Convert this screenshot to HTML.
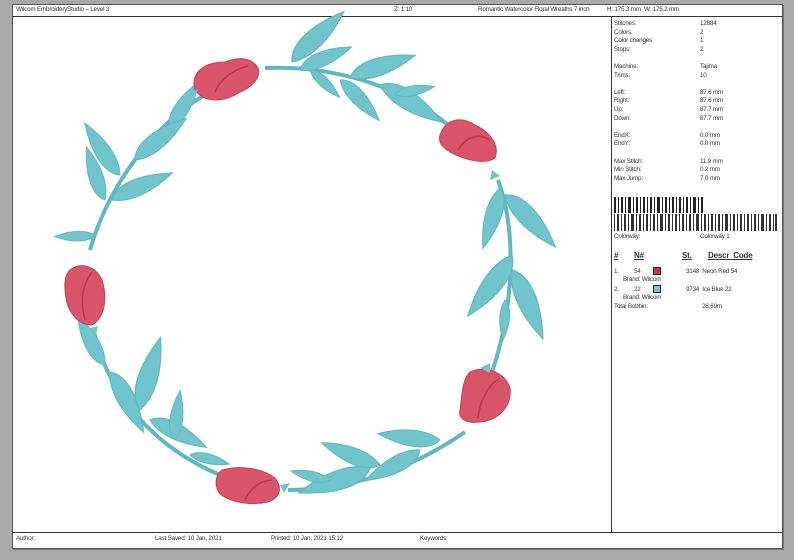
<!DOCTYPE html>
<html><head><meta charset="utf-8"><style>
body{margin:0;width:794px;height:560px;background:#a9a9a9;overflow:hidden;font-family:"Liberation Sans",sans-serif;}
.page{position:absolute;left:12px;top:4px;width:769px;height:543px;background:#fff;border:1px solid #555;box-shadow:1px 1px 0 #777;}
.t{position:absolute;font-size:6.3px;color:#333;white-space:nowrap;letter-spacing:-0.2px}
.hl{position:absolute;background:#333;}
</style></head><body>
<div class="page"></div>
<div class="hl" style="left:12px;top:16px;width:770px;height:1px"></div>
<div class="hl" style="left:611px;top:16px;width:1px;height:516px"></div>
<div class="hl" style="left:12px;top:532px;width:770px;height:1px"></div>
<div class="t" style="left:16px;top:6px">Wilcom EmbroideryStudio – Level 3</div>
<div class="t" style="left:394px;top:6px">Z: 1:10</div>
<div class="t" style="left:478px;top:6px">Romantic Watercolor Floral Wreaths 7 inch</div>
<div class="t" style="left:607px;top:6px">H: 175.3 mm &nbsp;W: 175.2 mm</div>
<div class="t" style="left:16px;top:535px">Author:</div>
<div class="t" style="left:155px;top:535px">Last Saved: 10 Jan, 2021</div>
<div class="t" style="left:271px;top:535px">Printed: 10 Jan, 2021 15:12</div>
<div class="t" style="left:420px;top:535px">Keywords:</div>

<div class="t" style="left:614px;top:20px;line-height:8.6px">Stitches:<br>Colors:<br>Color changes:<br>Stops:<br><br>Machine:<br>Trims:<br><br>Left:<br>Right:<br>Up:<br>Down:<br><br>EndX:<br>EndY:<br><br>Max Stitch:<br>Min Stitch:<br>Max Jump:</div>
<div class="t" style="left:700px;top:20px;line-height:8.6px">12884<br>2<br>1<br>2<br><br>Tajima<br>10<br><br>87.6 mm<br>87.6 mm<br>87.7 mm<br>87.7 mm<br><br>0.0 mm<br>0.0 mm<br><br>11.9 mm<br>0.2 mm<br>7.0 mm</div>
<svg style="position:absolute;left:614px;top:197px" width="168" height="35">
<g fill="#222">
<rect x="0" y="0" width="2" height="16"/><rect x="4" y="0" width="1" height="16"/><rect x="7" y="0" width="2" height="16"/><rect x="11" y="0" width="1" height="16"/><rect x="14" y="0" width="3" height="16"/><rect x="19" y="0" width="1" height="16"/><rect x="22" y="0" width="2" height="16"/><rect x="26" y="0" width="1" height="16"/><rect x="29" y="0" width="2" height="16"/><rect x="33" y="0" width="1" height="16"/><rect x="36" y="0" width="2" height="16"/><rect x="40" y="0" width="1" height="16"/><rect x="43" y="0" width="3" height="16"/><rect x="48" y="0" width="1" height="16"/><rect x="51" y="0" width="2" height="16"/><rect x="55" y="0" width="1" height="16"/><rect x="58" y="0" width="2" height="16"/><rect x="62" y="0" width="1" height="16"/><rect x="65" y="0" width="2" height="16"/><rect x="69" y="0" width="1" height="16"/><rect x="72" y="0" width="2" height="16"/><rect x="76" y="0" width="1" height="16"/><rect x="79" y="0" width="3" height="16"/><rect x="84" y="0" width="1" height="16"/><rect x="87" y="0" width="2" height="16"/>
</g>
<g fill="#333">
<rect x="0" y="17" width="1" height="17"/><rect x="3" y="17" width="2" height="17"/><rect x="7" y="17" width="1" height="17"/><rect x="10" y="17" width="2" height="17"/><rect x="14" y="17" width="1" height="17"/><rect x="17" y="17" width="3" height="17"/><rect x="22" y="17" width="1" height="17"/><rect x="25" y="17" width="2" height="17"/><rect x="29" y="17" width="1" height="17"/><rect x="32" y="17" width="2" height="17"/><rect x="36" y="17" width="1" height="17"/><rect x="39" y="17" width="2" height="17"/><rect x="43" y="17" width="1" height="17"/><rect x="46" y="17" width="3" height="17"/><rect x="51" y="17" width="1" height="17"/><rect x="54" y="17" width="2" height="17"/><rect x="58" y="17" width="1" height="17"/><rect x="61" y="17" width="2" height="17"/><rect x="65" y="17" width="1" height="17"/><rect x="68" y="17" width="2" height="17"/><rect x="72" y="17" width="1" height="17"/><rect x="75" y="17" width="2" height="17"/><rect x="79" y="17" width="1" height="17"/><rect x="82" y="17" width="3" height="17"/><rect x="87" y="17" width="1" height="17"/><rect x="90" y="17" width="2" height="17"/><rect x="94" y="17" width="1" height="17"/><rect x="97" y="17" width="2" height="17"/><rect x="101" y="17" width="1" height="17"/><rect x="104" y="17" width="2" height="17"/><rect x="108" y="17" width="1" height="17"/><rect x="111" y="17" width="3" height="17"/><rect x="116" y="17" width="1" height="17"/><rect x="119" y="17" width="2" height="17"/><rect x="123" y="17" width="1" height="17"/><rect x="126" y="17" width="2" height="17"/><rect x="130" y="17" width="1" height="17"/><rect x="133" y="17" width="2" height="17"/><rect x="137" y="17" width="1" height="17"/><rect x="140" y="17" width="2" height="17"/><rect x="144" y="17" width="1" height="17"/><rect x="147" y="17" width="3" height="17"/><rect x="152" y="17" width="1" height="17"/><rect x="155" y="17" width="2" height="17"/><rect x="159" y="17" width="1" height="17"/><rect x="161" y="17" width="2" height="17"/>
</g></svg>
<div class="t" style="left:614px;top:233px;background:#fff">Colorway:</div>
<div class="t" style="left:700px;top:233px;background:#fff">Colorway 1</div>
<div class="t" style="left:614px;top:251px;font-size:8px;font-weight:bold;text-decoration:underline">#</div>
<div class="t" style="left:634px;top:251px;font-size:8px;font-weight:bold;text-decoration:underline">N#</div>
<div class="t" style="left:682px;top:251px;font-size:8px;font-weight:bold;text-decoration:underline">St.</div>
<div class="t" style="left:708px;top:251px;font-size:8px;font-weight:bold;text-decoration:underline">Descr &nbsp;Code</div>
<div class="t" style="left:614px;top:268px">1.</div><div class="t" style="left:634px;top:268px">54</div>
<div style="position:absolute;left:653px;top:267px;width:6px;height:6px;background:#d9304f;border:1px solid #222"></div>
<div class="t" style="left:686px;top:268px">3148 &nbsp;Neon Red 54</div>
<div class="t" style="left:623px;top:276px">Brand: Wilcom</div>
<div class="t" style="left:614px;top:286px">2.</div><div class="t" style="left:634px;top:286px">22</div>
<div style="position:absolute;left:653px;top:285px;width:6px;height:6px;background:#7ec4e0;border:1px solid #222"></div>
<div class="t" style="left:686px;top:286px">9734 &nbsp;Ice Blue 22</div>
<div class="t" style="left:623px;top:294px">Brand: Wilcom</div>
<div class="t" style="left:614px;top:303px">Total Bobbin:</div>
<div class="t" style="left:702px;top:303px">28.69m</div>

<svg style="position:absolute;left:0;top:0" width="611" height="532">
<defs>
<path id="lf" d="M0,0 C8,-14 32,-17 62,-10 C42,1 18,8 0,0Z"/>
<path id="sl" d="M0,0 C6,-8 22,-10 40,-5 C26,2 12,5 0,0Z"/>
</defs>
<g fill="#70c4cb" stroke="#62b8bf">
<g fill="none" stroke-width="4">
<path d="M205,95 C160,120 110,180 90,250"/>
<path d="M265,68 C330,65 400,85 448,125"/>
<path d="M498,180 C520,240 510,320 492,372"/>
<path d="M465,432 C410,470 350,490 288,490"/>
<path d="M95,335 C110,400 160,450 220,475"/>
</g>
<g stroke-width="1">
<use href="#lf" transform="translate(292,62) rotate(-35) scale(1.15)"/>
<use href="#lf" transform="translate(300,70) rotate(-15) scale(.9)"/>
<use href="#sl" transform="translate(310,70) rotate(50)"/>
<use href="#lf" transform="translate(350,78) rotate(-10) scale(1.1)"/>
<use href="#lf" transform="translate(340,80) rotate(55) scale(.9)"/>
<use href="#lf" transform="translate(380,85) rotate(40) scale(1.15)"/>
<use href="#sl" transform="translate(395,95) rotate(-5)"/>
<use href="#lf" transform="translate(170,130) rotate(-50) scale(.9)"/>
<use href="#lf" transform="translate(135,160) rotate(-30) scale(1.05)"/>
<use href="#lf" transform="translate(120,175) rotate(-115) scale(1)"/>
<use href="#lf" transform="translate(105,200) rotate(-100) scale(.9)"/>
<use href="#lf" transform="translate(112,200) rotate(-15) scale(1.05)"/>
<use href="#sl" transform="translate(95,235) rotate(-175)"/>
<use href="#lf" transform="translate(500,188) rotate(115) scale(1)"/>
<use href="#lf" transform="translate(505,195) rotate(55) scale(1.15)"/>
<use href="#lf" transform="translate(512,255) rotate(135) scale(1.2)"/>
<use href="#lf" transform="translate(512,270) rotate(75) scale(1.2)"/>
<use href="#sl" transform="translate(505,300) rotate(100)"/>
<use href="#lf" transform="translate(440,440) rotate(-165) scale(1)"/>
<use href="#lf" transform="translate(420,450) rotate(160) scale(1)"/>
<use href="#lf" transform="translate(380,465) rotate(-150) scale(1)"/>
<use href="#lf" transform="translate(370,468) rotate(170) scale(1.2)"/>
<use href="#sl" transform="translate(330,480) rotate(-160)"/>
<use href="#lf" transform="translate(105,365) rotate(-110) scale(.9)"/>
<use href="#lf" transform="translate(110,372) rotate(70) scale(1.1)"/>
<use href="#lf" transform="translate(140,410) rotate(-65) scale(1.2)"/>
<use href="#lf" transform="translate(150,420) rotate(35) scale(1)"/>
<use href="#lf" transform="translate(175,440) rotate(-75) scale(.8)"/>
<use href="#sl" transform="translate(190,455) rotate(20)"/>
</g>
</g>
<g fill="#d95468" stroke="#c44258" stroke-width="1">
<path d="M195,90 C190,72 205,62 225,62 C240,56 252,58 258,68 C262,78 250,88 240,92 C225,102 205,104 195,90Z"/>
<path d="M440,135 C445,120 460,115 475,125 C490,132 500,145 495,158 C485,165 465,160 450,152 C442,147 438,142 440,135Z"/>
<path d="M70,270 C80,262 95,265 102,280 C108,300 104,318 92,325 C78,325 68,312 66,298 C64,285 64,276 70,270Z"/>
<path d="M470,372 C485,365 505,372 510,388 C512,405 500,420 480,422 C465,424 458,418 460,410 C462,396 462,380 470,372Z"/>
<path d="M222,470 C240,465 262,468 275,478 C283,488 280,498 268,502 C250,506 230,502 220,494 C214,486 215,475 222,470Z"/>
</g>
<g fill="none" stroke="#b63a50" stroke-width="1.5">
<path d="M215,92 C220,80 232,70 248,66"/><path d="M458,150 C465,138 478,132 490,140"/>
<path d="M85,320 C80,300 82,285 92,272"/><path d="M478,418 C480,400 488,385 500,378"/>
<path d="M245,500 C250,488 262,480 272,480"/>
</g>
<g fill="#70c4cb"><path d="M188,95 l10,-6 l-4,12z"/><path d="M492,170 l8,6 l-10,4z"/><path d="M90,328 l8,-2 l-2,10z"/><path d="M480,368 l10,-5 l0,10z"/><path d="M280,485 l10,-2 l-6,10z"/></g>
</svg>
</body></html>
